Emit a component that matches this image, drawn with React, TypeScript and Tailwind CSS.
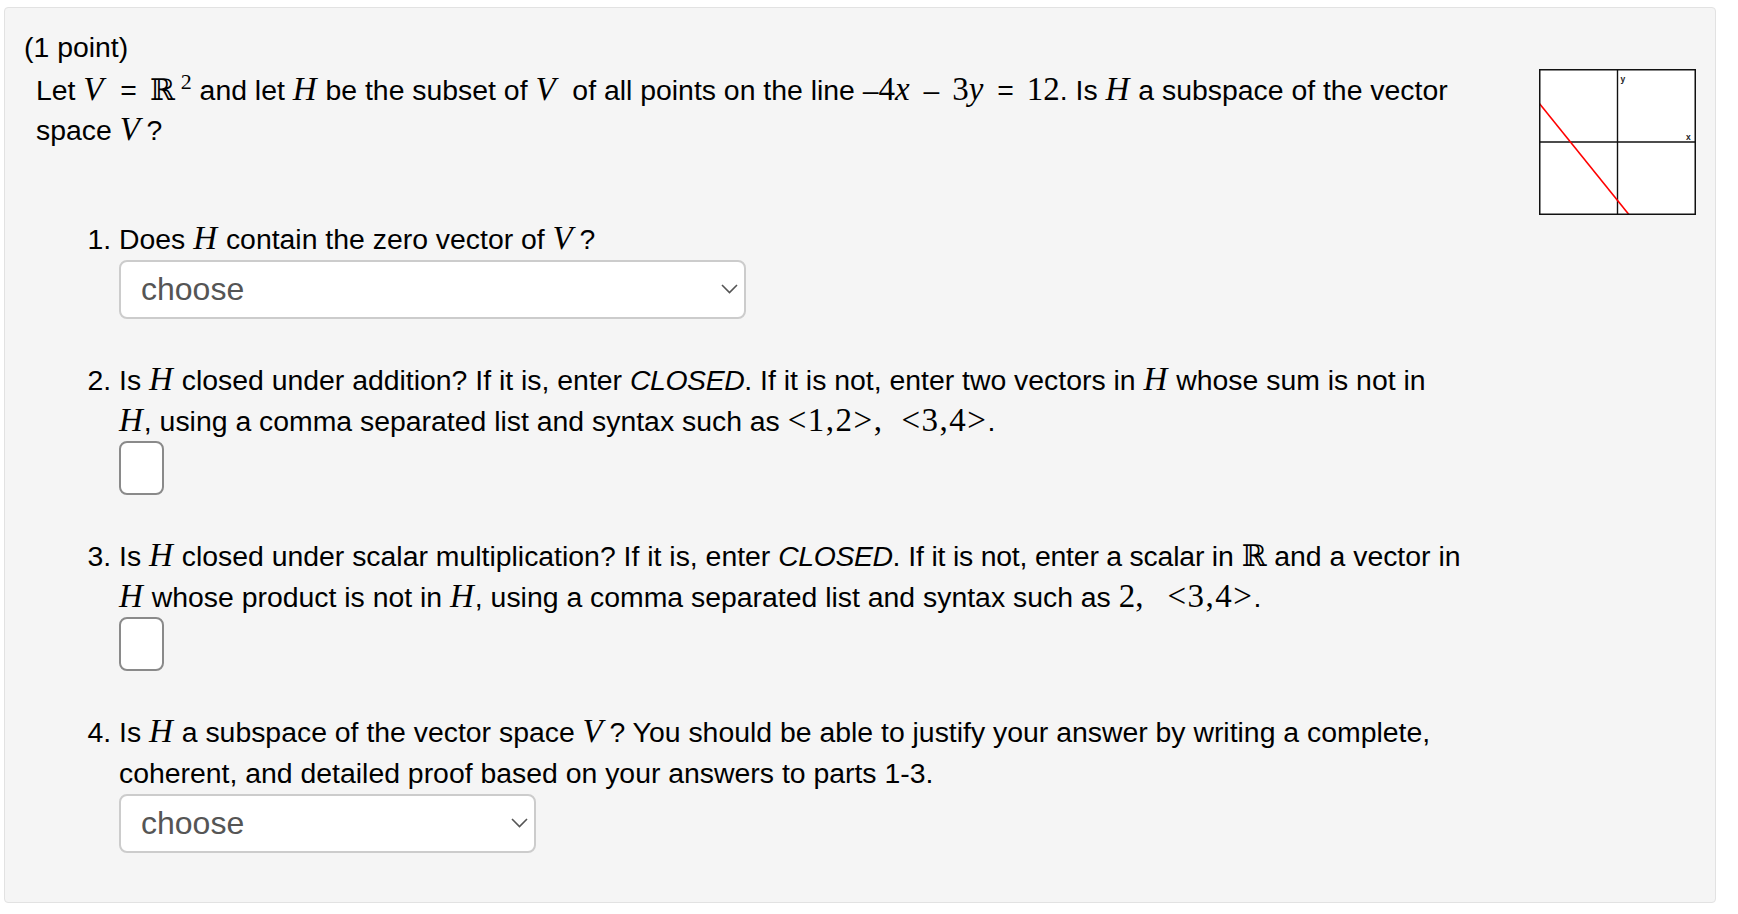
import type { ReactNode } from 'react';

const SANS = "font-['Liberation_Sans',Arial,sans-serif]";

function M({ children }: { children: ReactNode }) {
  return <span className="mr-[1px] font-['Liberation_Serif',serif] text-[33px] leading-none italic">{children}</span>;
}

function N({ children, wide }: { children: ReactNode; wide?: boolean }) {
  return (
    <span className={`font-['Liberation_Serif',serif] text-[33px] leading-none ${wide ? 'tracking-[1.5px]' : ''}`}>{children}</span>
  );
}

function Op({ children }: { children: ReactNode }) {
  return <span className="mx-[5px] leading-none">{children}</span>;
}

function R() {
  return <span className="font-['DejaVu_Serif',serif] text-[30px] leading-none">ℝ</span>;
}

function Closed() {
  return <i className="tracking-[-0.4px]">CLOSED</i>;
}

function Chevron() {
  return (
    <svg width="17" height="10" viewBox="0 0 17 10" className="pointer-events-none absolute right-[8px] top-[24px]">
      <polyline points="1,1 8.5,8.5 16,1" fill="none" stroke="#555" strokeWidth="1.6" />
    </svg>
  );
}

function ChooseBox({ width }: { width: string }) {
  return (
    <div className={`relative mt-[1px] h-[59px] ${width}`}>
      <select
        defaultValue="choose"
        className={`h-full w-full appearance-none rounded-[8px] border-2 border-[#cccccc] bg-white pl-[20px] text-[32px] text-[#555] outline-none ${SANS}`}
      >
        <option value="choose">choose</option>
        <option value="yes">yes</option>
        <option value="no">no</option>
      </select>
      <Chevron />
    </div>
  );
}

function AnswerBox() {
  return <input type="text" className="block h-[54px] w-[45px] rounded-[8px] border-2 border-[#8a8a8a] bg-white outline-none" />;
}

function Graph() {
  // window [-5,5] x [-5,5], line -4x - 3y = 12
  const w = 157;
  const h = 146;
  const sx = (x: number) => ((x + 5) / 10) * w;
  const sy = (y: number) => ((5 - y) / 10) * h;
  return (
    <svg width={w} height={h} className="float-right mt-[-1px] bg-white">
      <line x1={sx(0)} y1="0" x2={sx(0)} y2={h} stroke="#111" strokeWidth="1.4" />
      <line x1="0" y1={sy(0)} x2={w} y2={sy(0)} stroke="#111" strokeWidth="1.4" />
      <line x1={sx(-5)} y1={sy(20 / 3 - 4)} x2={sx(0.75)} y2={sy(-5)} stroke="#ff0000" strokeWidth="1.6" />
      <text x={sx(0) + 3} y="13" fontSize="8.5" fontWeight="700" fontFamily="Liberation Sans, Arial, sans-serif" fill="#222">
        y
      </text>
      <text x={w - 10} y={sy(0) - 2} fontSize="8.5" fontWeight="700" fontFamily="Liberation Sans, Arial, sans-serif" fill="#222">
        x
      </text>
      <rect x="0.75" y="0.75" width={w - 1.5} height={h - 1.5} fill="none" stroke="#111" strokeWidth="1.5" />
    </svg>
  );
}

export default function App() {
  return (
    <div className="min-h-screen bg-white pl-[4px] pt-[7px]">
      <div
        className={`h-[896px] w-[1712px] rounded-[4px] border border-[#e2e2e2] bg-[#f5f5f5] text-[28.4px] leading-[40.5px] text-black ${SANS}`}
      >
        <div className="pl-[19px] pt-[19px]">(1 point)</div>

        <div className="mt-[2px] pl-[31px] pr-[19px]">
          <Graph />
          <p className="whitespace-nowrap">
            Let <M>V</M>&nbsp; = <span className="ml-[5px]" />
            <R />
            <span className="ml-[6px] align-[11px] font-['Liberation_Serif',serif] text-[22px] leading-none">2</span> and let{' '}
            <M>H</M> be the subset of <M>V</M>&nbsp; of all points on the line –<N>4</N>
            <M>x</M> <Op>–</Op> <N>3</N>
            <M>y</M> <Op>=</Op> <N>12</N>. Is <M>H</M> a subspace of the vector
            <br />
            space <M>V</M>&thinsp;?
          </p>

          <ol className="mt-[68px] list-outside list-decimal space-y-[41px] pl-[83px]">
            <li>
              <div className="whitespace-nowrap">
                Does <M>H</M> contain the zero vector of <M>V</M>&thinsp;?
              </div>
              <ChooseBox width="w-[627px]" />
            </li>

            <li>
              <div className="whitespace-nowrap">
                Is <M>H</M> closed under addition? If it is, enter <Closed />. If it is not, enter two vectors in <M>H</M> whose sum
                is not in
                <br />
                <M>H</M>, using a comma separated list and syntax such as <N wide>&lt;1,2&gt;,&ensp;&lt;3,4&gt;</N>.
              </div>
              <AnswerBox />
            </li>

            <li>
              <div className="whitespace-nowrap">
                Is <M>H</M> closed under scalar multiplication? If it is, enter <Closed />.{' '}
                <span className="tracking-[-0.2px]">If it is not, enter a scalar in</span> <R /> and a vector in
                <br />
                <M>H</M> whose product is not in <M>H</M>, using a comma separated list and syntax such as <N>2,</N>
                <span className="ml-[24px]" />
                <N wide>&lt;3,4&gt;</N>.
              </div>
              <AnswerBox />
            </li>

            <li>
              <div className="whitespace-nowrap">
                Is <M>H</M> a subspace of the vector space <M>V</M>&thinsp;? You should be able to justify your answer by writing a
                complete,
                <br />
                coherent, and detailed proof based on your answers to parts 1-3.
              </div>
              <ChooseBox width="w-[417px]" />
            </li>
          </ol>
        </div>
      </div>
    </div>
  );
}
